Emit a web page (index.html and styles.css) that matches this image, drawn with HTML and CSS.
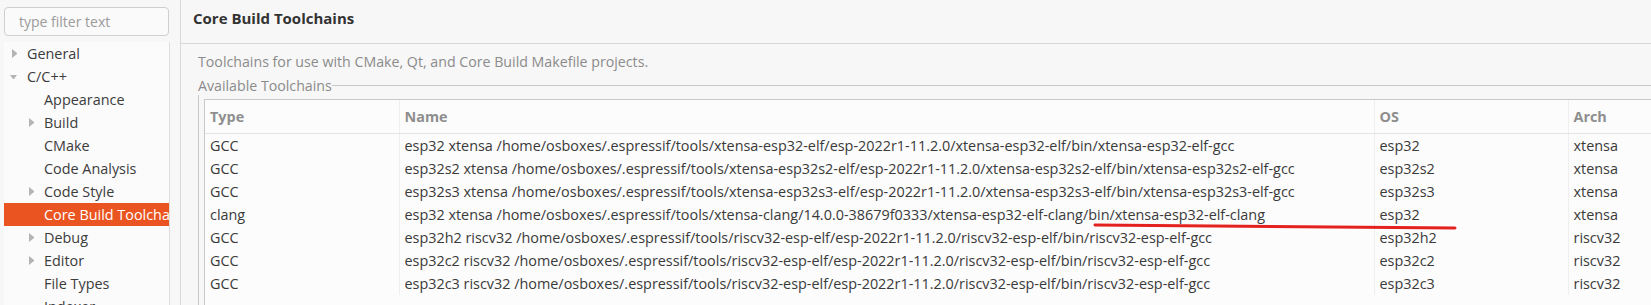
FILE: index.html
```html
<!DOCTYPE html>
<html lang="en">
<head>
    <meta charset="UTF-8">
    <title>Preferences - Core Build Toolchains</title>
    <link rel="stylesheet" href="styles.css">
</head>
<body>
    <div class="sidebar">
        <input type="text" class="filter" placeholder="type filter text">
        <div class="tree">
            <div class="node lvl0"><span class="twisty closed"></span>General</div>
            <div class="node lvl0"><span class="twisty open"></span>C/C++</div>
            <div class="node lvl1"><span class="twisty"></span>Appearance</div>
            <div class="node lvl1"><span class="twisty closed"></span>Build</div>
            <div class="node lvl1"><span class="twisty"></span>CMake</div>
            <div class="node lvl1"><span class="twisty"></span>Code Analysis</div>
            <div class="node lvl1"><span class="twisty closed"></span>Code Style</div>
            <div class="node lvl1 selected"><span class="twisty"></span>Core Build Toolchains</div>
            <div class="node lvl1"><span class="twisty closed"></span>Debug</div>
            <div class="node lvl1"><span class="twisty closed"></span>Editor</div>
            <div class="node lvl1"><span class="twisty"></span>File Types</div>
            <div class="node lvl1"><span class="twisty"></span>Indexer</div>
        </div>
    </div>

    <div class="page">
        <div class="page-title">Core Build Toolchains</div>
        <div class="page-body">
            <div class="description">Toolchains for use with CMake, Qt, and Core Build Makefile projects.</div>
            <div class="group">
                <div class="group-title"><span>Available Toolchains</span></div>
                <div class="group-body">
                    <div class="table-box">
                        <table class="toolchains">
                            <colgroup>
                                <col class="col-type">
                                <col class="col-name">
                                <col class="col-os">
                                <col class="col-arch">
                            </colgroup>
                            <tr>
                                <th>Type</th><th>Name</th><th>OS</th><th>Arch</th>
                            </tr>
                            <tr>
                                <td>GCC</td>
                                <td>esp32 xtensa /home/osboxes/.espressif/tools/xtensa-esp32-elf/esp-2022r1-11.2.0/xtensa-esp32-elf/bin/xtensa-esp32-elf-gcc</td>
                                <td>esp32</td><td>xtensa</td>
                            </tr>
                            <tr>
                                <td>GCC</td>
                                <td>esp32s2 xtensa /home/osboxes/.espressif/tools/xtensa-esp32s2-elf/esp-2022r1-11.2.0/xtensa-esp32s2-elf/bin/xtensa-esp32s2-elf-gcc</td>
                                <td>esp32s2</td><td>xtensa</td>
                            </tr>
                            <tr>
                                <td>GCC</td>
                                <td>esp32s3 xtensa /home/osboxes/.espressif/tools/xtensa-esp32s3-elf/esp-2022r1-11.2.0/xtensa-esp32s3-elf/bin/xtensa-esp32s3-elf-gcc</td>
                                <td>esp32s3</td><td>xtensa</td>
                            </tr>
                            <tr>
                                <td>clang</td>
                                <td>esp32 xtensa /home/osboxes/.espressif/tools/xtensa-clang/14.0.0-38679f0333/xtensa-esp32-elf-clang/bin/xtensa-esp32-elf-clang</td>
                                <td>esp32</td><td>xtensa</td>
                            </tr>
                            <tr>
                                <td>GCC</td>
                                <td>esp32h2 riscv32 /home/osboxes/.espressif/tools/riscv32-esp-elf/esp-2022r1-11.2.0/riscv32-esp-elf/bin/riscv32-esp-elf-gcc</td>
                                <td>esp32h2</td><td>riscv32</td>
                            </tr>
                            <tr>
                                <td>GCC</td>
                                <td>esp32c2 riscv32 /home/osboxes/.espressif/tools/riscv32-esp-elf/esp-2022r1-11.2.0/riscv32-esp-elf/bin/riscv32-esp-elf-gcc</td>
                                <td>esp32c2</td><td>riscv32</td>
                            </tr>
                            <tr>
                                <td>GCC</td>
                                <td>esp32c3 riscv32 /home/osboxes/.espressif/tools/riscv32-esp-elf/esp-2022r1-11.2.0/riscv32-esp-elf/bin/riscv32-esp-elf-gcc</td>
                                <td>esp32c3</td><td>riscv32</td>
                            </tr>
                        </table>
                    </div>
                </div>
            </div>
        </div>
    </div>

    <!-- red annotation under the clang row -->
    <svg class="mark" width="370" height="12" viewBox="0 0 370 12">
        <path d="M3 4 L363 7" stroke="#e3211e" stroke-width="3" stroke-linecap="round" fill="none"/>
    </svg>
</body>
</html>
```
FILE: styles.css
```css
body {
    margin: 0;
    height: 305px;
    overflow: hidden;
    display: flex;
    background: #f7f7f7;
    font-family: "Open Sans", sans-serif;
    font-size: 14.4px;
    color: #3c3c3c;
}

/* left side: filter + preference tree */
.sidebar {
    width: 170px;
    flex: none;
    padding-left: 4px;
    box-sizing: border-box;
}

.filter {
    display: block;
    margin-top: 7px;
    width: 165px;
    height: 29px;
    box-sizing: border-box;
    border: 1px solid #cfcfcf;
    border-radius: 4px;
    background: #fafafa;
    padding: 0 0 0 14px;
    font-family: "Open Sans", sans-serif;
    font-size: 14px;
    color: #3c3c3c;
}

.filter::placeholder {
    color: #9b9b9b;
}

.tree {
    margin-top: 6px;
    width: 166px;
    height: 263px;
    box-sizing: border-box;
    border-right: 1px solid #dedede;
    background: #fbfbfb;
    overflow: hidden;
    white-space: nowrap;
}

.node {
    display: flex;
    align-items: center;
    height: 23px;
}

.lvl0 { padding-left: 8px; }
.lvl1 { padding-left: 25px; }

.twisty {
    width: 6px;
    height: 9px;
    margin-right: 9px;
    flex: none;
    box-sizing: border-box;
}

.twisty.closed {
    border-left: 5px solid #b4b4b4;
    border-top: 4.5px solid transparent;
    border-bottom: 4.5px solid transparent;
}

.twisty.open {
    width: 7px;
    height: 4px;
    margin-left: -2px;
    margin-right: 10px;
    border-top: 4px solid #b4b4b4;
    border-left: 3.5px solid transparent;
    border-right: 3.5px solid transparent;
}

.node.selected {
    background: #e95420;
    color: #fff;
}

/* right side: the preference page */
.page {
    flex: 1;
    min-width: 0;
    margin-left: 10px;
    border-left: 1px solid #dadada;
    overflow: hidden;
}

.page-title {
    height: 44px;
    box-sizing: border-box;
    padding: 8px 0 0 12px;
    line-height: 20px;
    border-bottom: 1px solid #d8d8d8;
    font-size: 15px;
    font-weight: bold;
    color: #333;
    white-space: nowrap;
}

.page-body {
    padding-left: 17px;
}

.description {
    margin-top: 8px;
    line-height: 20px;
    font-size: 14.2px;
    color: #8b8b8b;
    white-space: nowrap;
}

.group {
    margin-top: 3px;
    width: 1500px;
}

.group-title {
    display: flex;
    align-items: center;
    height: 20px;
    font-size: 14.2px;
    color: #8b8b8b;
    white-space: nowrap;
}

.group-title::after {
    content: "";
    flex: 1;
    border-top: 1px solid #c9c9c9;
}

.group-body {
    border-left: 1px solid #c9c9c9;
    padding: 4px 0 0 5px;
}

.table-box {
    height: 205px;
    border: 1px solid #c9c9c9;
    border-right: none;
    border-bottom: none;
    background: #fcfcfc;
    overflow: hidden;
}

.toolchains {
    table-layout: fixed;
    border-collapse: collapse;
    width: 1494px;
    white-space: nowrap;
}

.col-type { width: 194px; }
.col-name { width: 975px; }
.col-os { width: 194px; }
.col-arch { width: 131px; }

.toolchains th,
.toolchains td {
    padding: 0 0 0 5px;
    text-align: left;
    overflow: hidden;
}

.toolchains th + th,
.toolchains td + td {
    border-left: 1px solid #efefef;
}

.toolchains th {
    height: 33px;
    border-bottom: 1px solid #e4e4e4;
    font-weight: bold;
    color: #8e8e8e;
}

.toolchains td {
    height: 23px;
    color: #3a3a3a;
}

.mark {
    position: absolute;
    left: 1092px;
    top: 221px;
}
```
